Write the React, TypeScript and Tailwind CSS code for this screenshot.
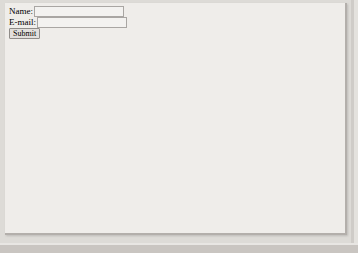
import React from "react";

export default function App() {
  return (
    <div className="w-[358px] h-[253px] bg-[#dddbd7] flex flex-col overflow-hidden" style={{ fontFamily: '"Liberation Serif", "Times New Roman", serif' }}>
      <div className="flex h-[243px]">
        <div className="ml-[5px] mt-[3px] w-[342px] h-[232px] bg-[#efedea] border-r-2 border-b-2 border-[#b3afab] shadow-[1px_1px_2px_rgba(0,0,0,0.15)] pl-[4px] pt-[3px] text-[9px] leading-[11px] text-black">
          <div className="flex items-center">
            <span>Name:</span>
            <input className="ml-[1px] w-[90px] h-[11px] bg-[#f3f2f0] border border-[#a9a6a3] outline-none" />
          </div>
          <div className="flex items-center">
            <span>E-mail:</span>
            <input className="ml-[1px] w-[90px] h-[11px] bg-[#f3f2f0] border border-[#a9a6a3] outline-none" />
          </div>
          <button className="h-[11px] px-[3px] text-[8px] leading-[9px] bg-[#e2dfdc] border border-[#8f8c89] rounded-[1px]">
            Submit
          </button>
        </div>
        <div className="ml-[4px] w-[3px] bg-[#cfccc8]" />
        <div className="flex-1 bg-[#e4e2de]" />
      </div>
      <div className="h-[2px] bg-[#e8e6e3]" />
      <div className="flex-1 bg-[#c9c5c1]" />
    </div>
  );
}
